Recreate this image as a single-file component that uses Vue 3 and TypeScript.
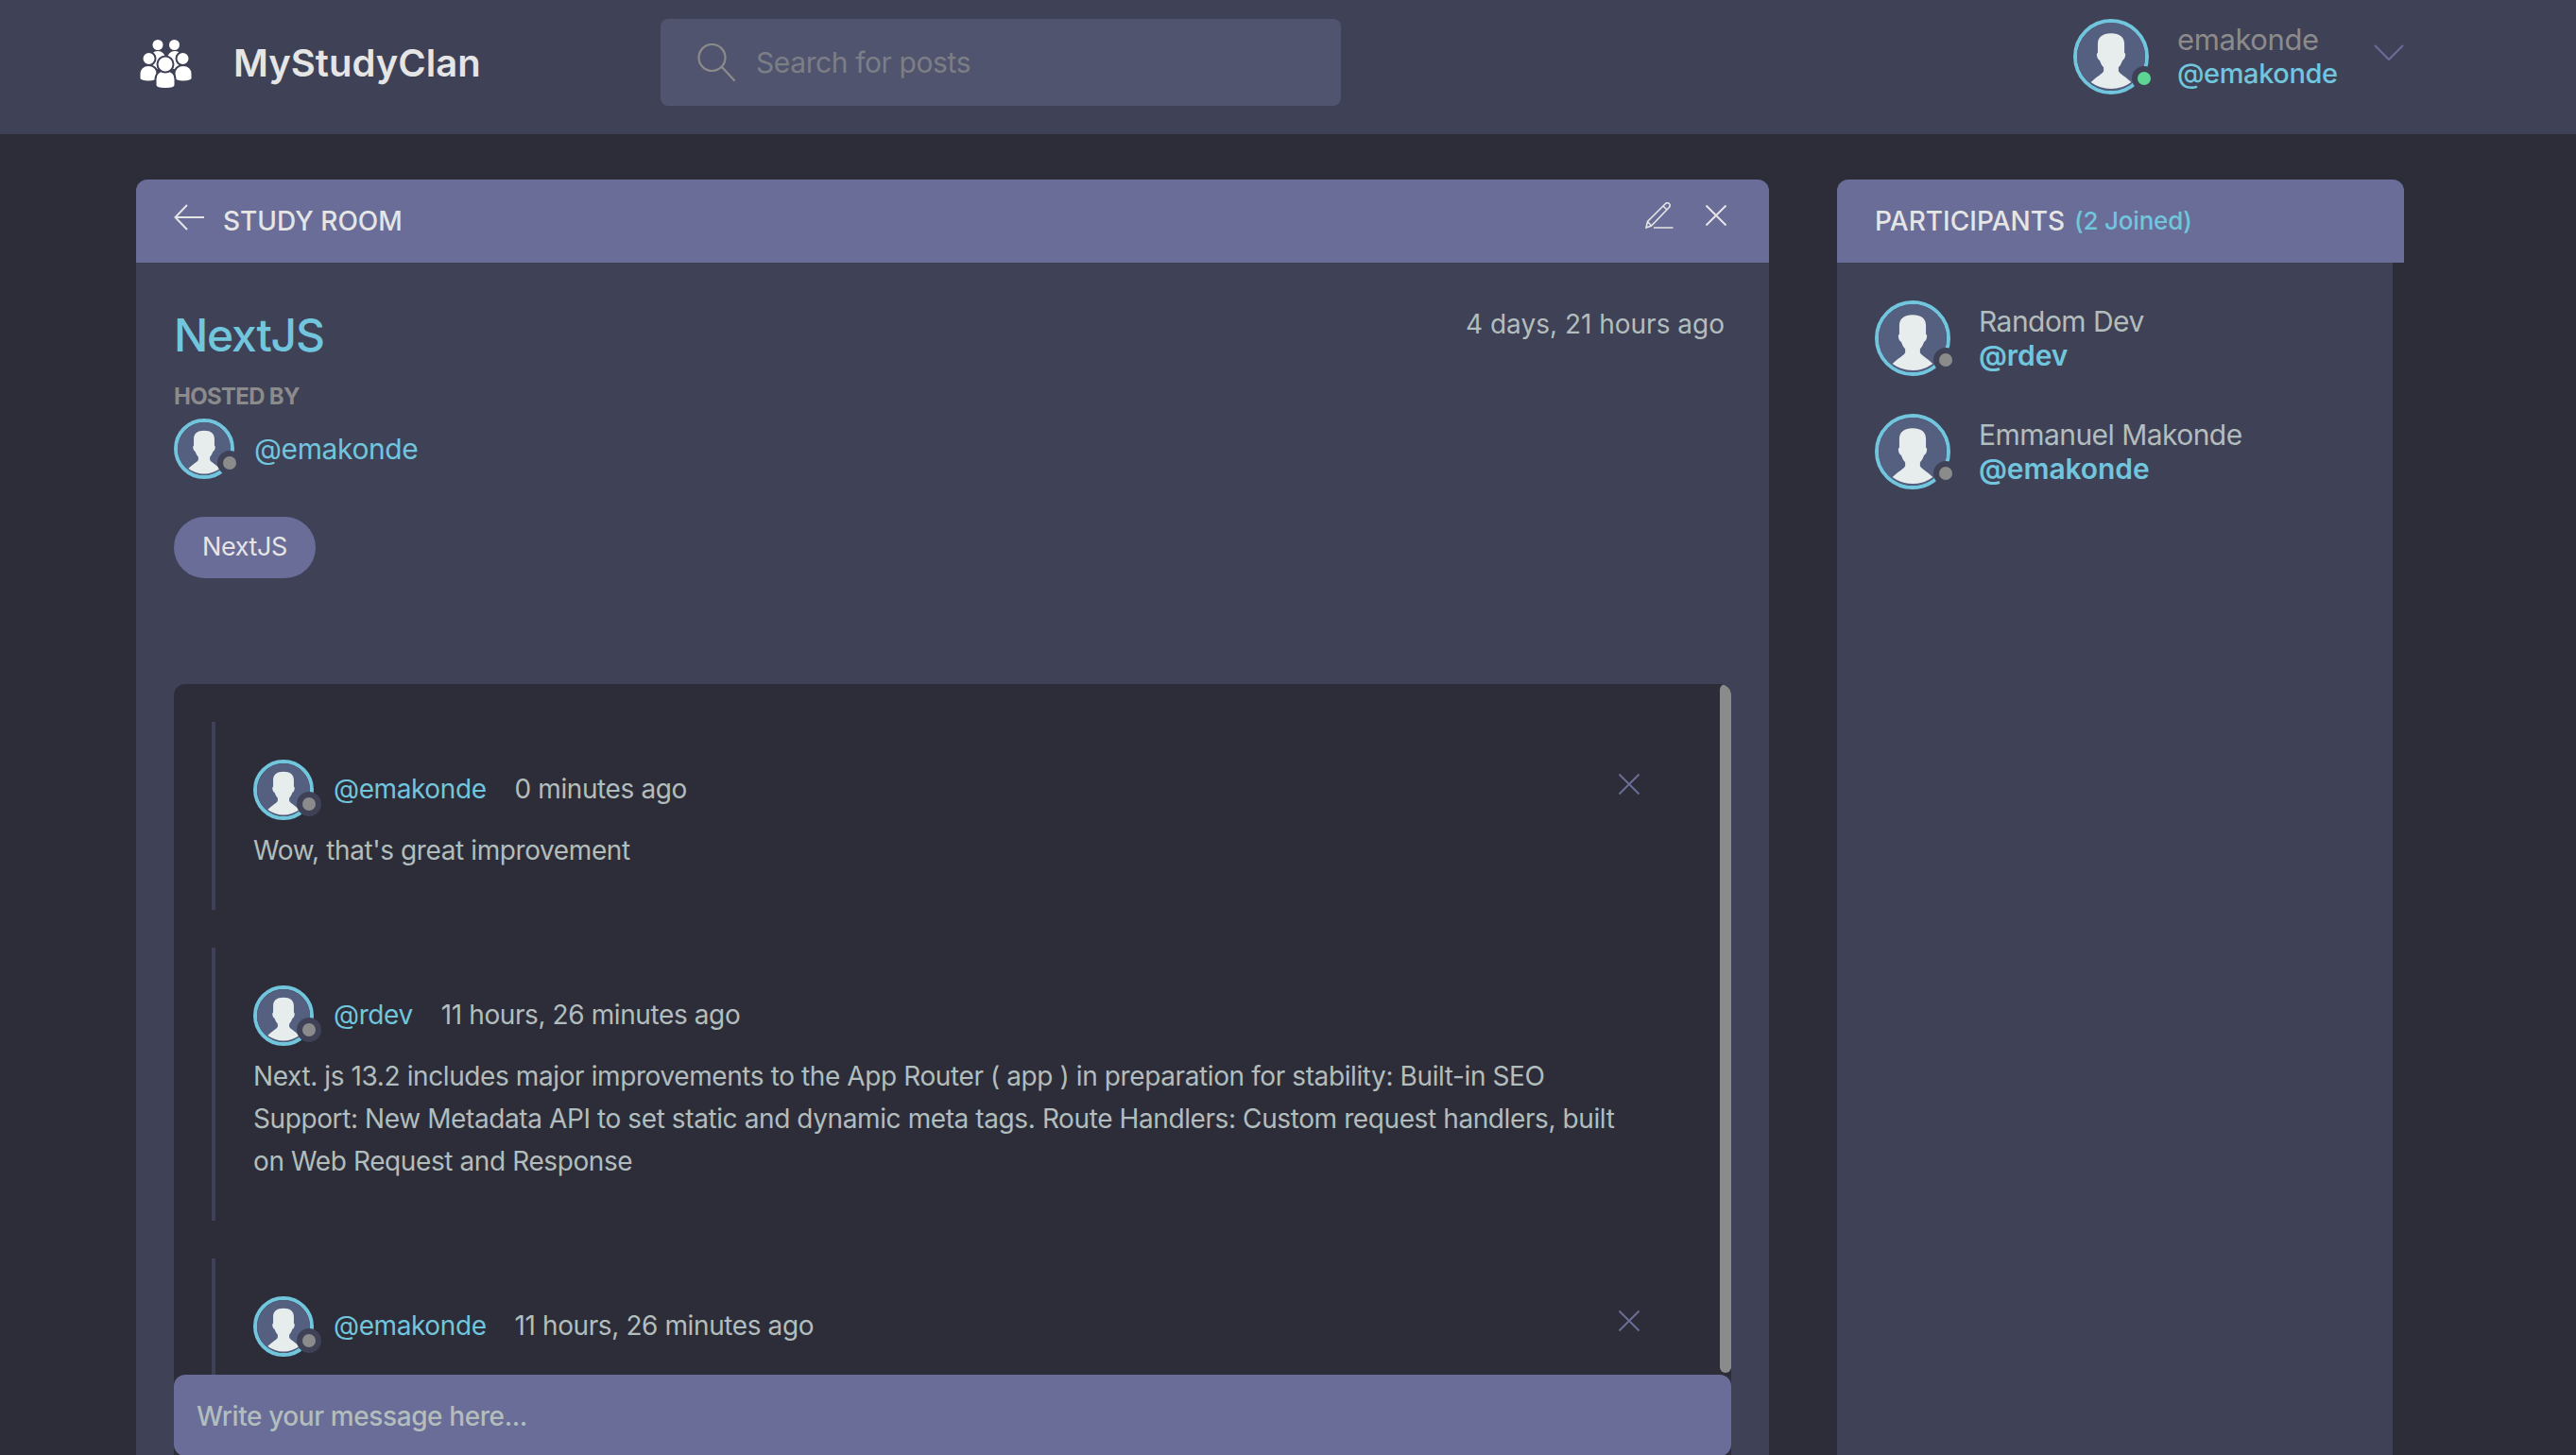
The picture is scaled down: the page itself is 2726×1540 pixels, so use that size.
<template>
  <div class="page">
    <svg class="defs" width="0" height="0" aria-hidden="true">
      <symbol id="user-avatar" viewBox="0 0 64 64">
        <rect width="64" height="64" fill="#556080" />
        <path
          fill="#e7eced"
          d="M32 10c-8 0-12.500 3.500-12.500 10v8l-1 1.500c0 3 1.200 5 2.800 6 1 3 2.200 5 3.700 6.500v3.500c-1 2.500-6.500 5-12 10.500A32 32 0 0 0 51 56c-5.500-5.500-11-8-12-10.500V42c1.500-1.500 2.700-3.500 3.700-6.500 1.600-1 2.800-3 2.800-6l-1-1.500v-8c0-6.500-4.500-10-12.500-10z"
        />
      </symbol>
    </svg>

    <!-- top bar -->
    <header class="topbar">
      <a class="brand">
        <svg class="brand-icon" width="56" height="58" viewBox="0 0 56 58">
          <g fill="#fff" stroke="#3f4156" stroke-width="2">
            <path stroke="none" d="M11 36V25a8 8 0 0 1 16 0v11zM29 36V25a8 8 0 0 1 16 0v11z" />
            <circle stroke="none" cx="19" cy="10.500" r="5.500" />
            <circle stroke="none" cx="36.500" cy="10.500" r="5.500" />
            <path d="M-.5 46v-5c0-5.500 4-9 9.500-9s9.500 3.500 9.500 9v5c0 2-4 3.500-9.500 3.500S-.5 48-.5 46z" />
            <path d="M36.500 46v-5c0-5.500 4-9 9.500-9s9.500 3.500 9.500 9v5c0 2-4 3.500-9.500 3.500S36.500 48 36.500 46z" />
            <circle cx="9.500" cy="25" r="7" />
            <circle cx="45.500" cy="25" r="7" />
            <path d="M16.500 53v-6c0-6 4.300-9.500 10.500-9.500S37.500 41 37.500 47v6c0 2.500-4.500 4-10.500 4s-10.500-1.500-10.500-4z" />
            <circle cx="27" cy="31" r="8.500" />
          </g>
        </svg>
        <h1>MyStudyClan</h1>
      </a>

      <form class="search" @submit.prevent>
        <svg width="40" height="40" viewBox="0 0 40 40" fill="none" stroke="#8b8b8b" stroke-width="2.200">
          <circle cx="15.500" cy="15" r="14" />
          <path d="M26 25l13 14" stroke-linecap="round" />
        </svg>
        <input type="text" placeholder="Search for posts" />
      </form>

      <div class="account">
        <div class="avatar avatar--large avatar--active">
          <svg><use href="#user-avatar" /></svg>
        </div>
        <div class="account-names">
          <p class="account-name">emakonde</p>
          <span class="account-handle">@emakonde</span>
        </div>
        <svg class="chevron" width="32" height="18" viewBox="0 0 32 18" fill="none" stroke="#696d97" stroke-width="2">
          <path d="M1 1l15 15L31 1" />
        </svg>
      </div>
    </header>

    <main class="layout">
      <!-- room -->
      <section class="panel">
        <div class="panel-header">
          <div class="panel-heading">
            <svg class="back-icon" width="32" height="28" viewBox="0 0 32 28" fill="none" stroke="#e5e5e5" stroke-width="2">
              <path d="M14 1L1.500 14 14 27M1.500 14H32" />
            </svg>
            <h3>STUDY ROOM</h3>
          </div>
          <div class="panel-actions">
            <svg width="30" height="28" viewBox="0 0 30 28" fill="none" stroke="#e5e5e5" stroke-width="1.600">
              <path d="M1 27l1.500-6.500L21.500 1.500q2-1.500 3.800 0t.2 3.800L6.500 25z M2.500 20.500l4 4.500M19 4l4.500 4.500M9 27h20.500" />
            </svg>
            <svg width="22" height="22" viewBox="0 0 22 22" fill="none" stroke="#e5e5e5" stroke-width="2">
              <path d="M.5.500l21 21M21.500.500l-21 21" />
            </svg>
          </div>
        </div>

        <div class="panel-body room-body">
          <div class="room-top">
            <h2 class="room-title">NextJS</h2>
            <span class="room-time">4 days, 21 hours ago</span>
          </div>
          <span class="hosted-label">HOSTED BY</span>
          <a class="host">
            <div class="avatar"><svg><use href="#user-avatar" /></svg></div>
            <span>@emakonde</span>
          </a>
          <span class="tag">NextJS</span>

          <div class="conversation">
            <div class="thread">
              <div v-for="(post, i) in posts" :key="i" class="post">
                <div class="post-top">
                  <div class="avatar"><svg><use href="#user-avatar" /></svg></div>
                  <a class="post-author">@{{ post.author }}</a>
                  <span class="post-time">{{ post.time }}</span>
                  <svg v-if="post.removable" class="post-remove" width="22" height="22" viewBox="0 0 22 22" fill="none" stroke="#696d97" stroke-width="2">
                    <path d="M.5.500l21 21M21.500.500l-21 21" />
                  </svg>
                </div>
                <p v-if="post.body" class="post-body">{{ post.body }}</p>
              </div>
            </div>
            <form class="composer" @submit.prevent>
              <input type="text" placeholder="Write your message here..." />
            </form>
            <div class="scroll-thumb"></div>
          </div>
        </div>
      </section>

      <!-- participants -->
      <aside class="panel">
        <div class="panel-header">
          <div class="panel-heading panel-heading--tight">
            <h3>PARTICIPANTS</h3>
            <span class="joined">(2 Joined)</span>
          </div>
        </div>
        <div class="panel-body people">
          <a v-for="person in participants" :key="person.handle" class="person">
            <div class="avatar avatar--large"><svg><use href="#user-avatar" /></svg></div>
            <div class="person-names">
              <p>{{ person.name }}</p>
              <span>@{{ person.handle }}</span>
            </div>
          </a>
        </div>
      </aside>
    </main>
  </div>
</template>

<script setup lang="ts">
interface Post {
  author: string;
  time: string;
  body?: string;
  removable: boolean;
}

const posts: Post[] = [
  {
    author: 'emakonde',
    time: '0 minutes ago',
    body: "Wow, that's great improvement",
    removable: true
  },
  {
    author: 'rdev',
    time: '11 hours, 26 minutes ago',
    body: 'Next. js 13.2 includes major improvements to the App Router ( app ) in preparation for stability: Built-in SEO Support: New Metadata API to set static and dynamic meta tags. Route Handlers: Custom request handlers, built on Web Request and Response',
    removable: false
  },
  {
    author: 'emakonde',
    time: '11 hours, 26 minutes ago',
    removable: true
  }
];

const participants = [
  { name: 'Random Dev', handle: 'rdev' },
  { name: 'Emmanuel Makonde', handle: 'emakonde' }
];
</script>

<style>
html,
body {
  margin: 0;
  background: #2d2d39;
}
</style>

<style scoped>
.page {
  height: 1540px;
  overflow: hidden;
  background: #2d2d39;
  color: #e5e5e5;
  font-family: Inter, "Noto Sans", sans-serif;
  font-size: 28px;
  letter-spacing: -0.4px;
}

.defs {
  position: absolute;
}

h1,
h2,
h3,
p {
  margin: 0;
}

/* top bar */
.topbar {
  display: flex;
  align-items: flex-start;
  height: 142px;
  box-sizing: border-box;
  padding: 20px 182px 0 148px;
  background: #3f4156;
}

.brand {
  display: flex;
  align-items: center;
  gap: 43px;
  width: 551px;
  height: 92px;
}

.brand-icon {
  flex-shrink: 0;
}

.brand h1 {
  font-size: 40px;
  font-weight: 600;
  letter-spacing: 0;
  color: #e5e5e5;
}

.search {
  display: flex;
  align-items: center;
  gap: 22px;
  width: 720px;
  height: 92px;
  box-sizing: border-box;
  padding-left: 39px;
  border-radius: 8px;
  background: #51546e;
}

.search input,
.composer input {
  flex: 1;
  min-width: 0;
  border: 0;
  outline: 0;
  padding: 0;
  background: transparent;
  color: #e5e5e5;
  font: inherit;
  letter-spacing: inherit;
}

.search input {
  font-size: 30px;
}

.search input::placeholder {
  color: #7c7e86;
}

.account {
  display: flex;
  align-items: flex-start;
  margin-left: auto;
}

.account-names {
  margin: 4px 0 0 30px;
  width: 208px;
  font-size: 31px;
  line-height: 35px;
}

.account-name {
  color: #8b8b8b;
}

.account-handle {
  color: #71c6dd;
  font-size: 29px;
  font-weight: 500;
}

.chevron {
  margin-top: 27px;
}

/* avatars */
.avatar {
  position: relative;
  flex-shrink: 0;
  width: 64px;
  height: 64px;
  box-sizing: border-box;
  border: 4px solid #71c6dd;
  border-radius: 50%;
}

.avatar svg {
  display: block;
  width: 100%;
  height: 100%;
  border-radius: 50%;
}

.avatar::after {
  content: '';
  position: absolute;
  right: -12px;
  bottom: 0;
  width: 14px;
  height: 14px;
  border: 6px solid #3f4156;
  border-radius: 50%;
  background: #8b8b8b;
}

.avatar--large {
  width: 80px;
  height: 80px;
}

.avatar--active::after {
  background: #5dd693;
}

/* panels */
.layout {
  display: grid;
  grid-template-columns: 1728px 600px;
  gap: 72px;
  padding: 48px 0 0 144px;
}

.panel-header {
  display: flex;
  align-items: flex-start;
  justify-content: space-between;
  height: 88px;
  box-sizing: border-box;
  padding: 24px 45px 0 40px;
  border-radius: 12px 12px 0 0;
  background: #696d97;
}

.panel-heading {
  display: flex;
  align-items: center;
  gap: 20px;
  height: 40px;
}

.panel-heading--tight {
  gap: 10px;
  padding-left: 0;
}

.panel-heading h3 {
  font-size: 28px;
  font-weight: 500;
  letter-spacing: 0;
}

.back-icon {
  margin-top: -8px;
}

.panel-actions {
  display: flex;
  align-items: center;
  gap: 34px;
  height: 28px;
}

.joined {
  margin-top: -2px;
  font-size: 26px;
  font-weight: 500;
  letter-spacing: -0.2px;
  color: #71c6dd;
}

.panel-body {
  height: 1300px;
  box-sizing: border-box;
  background: #3f4156;
}

/* room */
.room-body {
  padding: 42px 40px 0;
}

.room-top {
  display: flex;
  align-items: flex-start;
  justify-content: space-between;
  padding-right: 7px;
}

.room-title {
  font-size: 48px;
  font-weight: 500;
  line-height: 70px;
  letter-spacing: -1.2px;
  color: #71c6dd;
}

.room-time {
  margin-top: 1px;
  line-height: 45px;
  letter-spacing: 0;
  color: #b2bdbd;
}

.hosted-label {
  display: block;
  margin: 11px 0 0;
  font-size: 24px;
  font-weight: 700;
  line-height: 38px;
  letter-spacing: -0.7px;
  color: #8b8b8b;
}

.host {
  display: flex;
  align-items: center;
  gap: 21px;
  margin-top: 4px;
  font-size: 30px;
  color: #71c6dd;
}

.tag {
  display: block;
  width: 150px;
  height: 65px;
  margin-top: 40px;
  border-radius: 33px;
  background: #696d97;
  font-size: 27px;
  line-height: 63px;
  text-align: center;
}

.conversation {
  position: relative;
  margin-top: 112px;
  border-radius: 12px 12px 0 0;
  background: #2d2d39;
  overflow: hidden;
}

.thread {
  height: 731px;
  box-sizing: border-box;
  overflow: hidden;
  padding: 40px 97px 0 40px;
}

.post {
  margin-bottom: 40px;
  padding: 40px 0 40px 40px;
  border-left: 4px solid #3f4156;
}

.post-top {
  display: flex;
  align-items: center;
  height: 64px;
}

.post-author {
  margin: -2px 0 0 21px;
  color: #71c6dd;
}

.post-time {
  margin: -2px 0 0 30px;
  color: #b2bdbd;
}

.post-remove {
  align-self: flex-start;
  margin: 15px 0 0 auto;
}

.post-body {
  max-width: 1452px;
  margin-top: 10px;
  line-height: 45px;
  color: #b2bdbd;
}

.composer {
  display: flex;
  align-items: center;
  height: 86px;
  box-sizing: border-box;
  padding: 2px 24px 0;
  border-radius: 12px;
  background: #696d97;
}

.composer input {
  font-weight: 500;
}

.composer input::placeholder {
  color: #b2bdbd;
}

.scroll-thumb {
  position: absolute;
  top: 0;
  right: 0;
  width: 12px;
  height: 729px;
  border-radius: 6px;
  background: #8b8b8b;
}

/* participants */
.people {
  display: flex;
  flex-direction: column;
  gap: 40px;
  margin-right: 12px;
  padding: 40px;
}

.person {
  display: flex;
  align-items: center;
  gap: 30px;
}

.person-names {
  font-size: 30px;
  line-height: 36px;
  letter-spacing: -0.55px;
  color: #b2bdbd;
}

.person-names span {
  color: #71c6dd;
  font-weight: 600;
  letter-spacing: -0.1px;
}
</style>
